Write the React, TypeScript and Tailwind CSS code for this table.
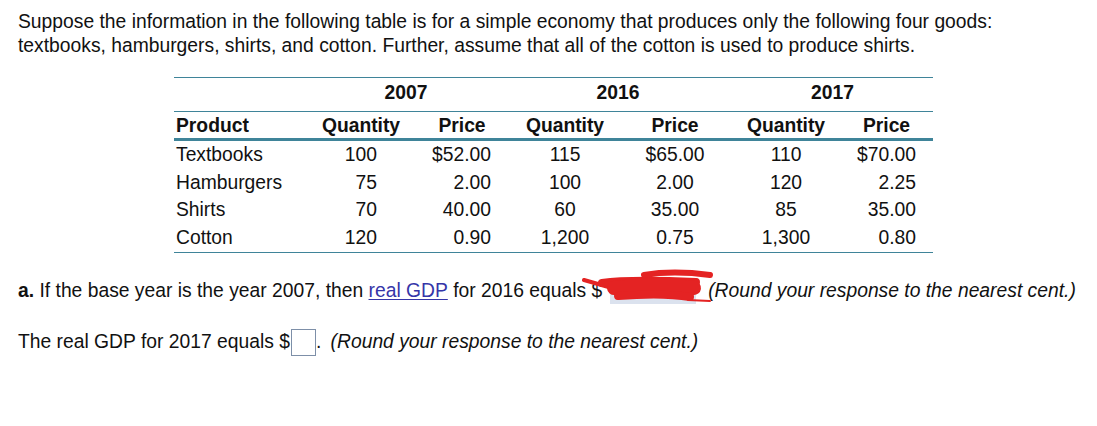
export default function App() {
  const rows = [
    ['Textbooks', '100', '$52.00', '115', '$65.00', '110', '$70.00'],
    ['Hamburgers', '75', '2.00', '100', '2.00', '120', '2.25'],
    ['Shirts', '70', '40.00', '60', '35.00', '85', '35.00'],
    ['Cotton', '120', '0.90', '1,200', '0.75', '1,300', '0.80'],
  ]
  const cols = 'grid grid-cols-[136px_102px_100px_106px_114px_108px_93px]'

  return (
    <div className="w-[1097px] h-[426px] bg-white text-[#111] font-['Liberation_Sans',Arial,sans-serif] text-[19.3px]">
      <p className="pl-[18px] pt-[10px] leading-[24px]">
        Suppose the information in the following table is for a simple economy that produces only the following four goods:
        <br />
        textbooks, hamburgers, shirts, and cotton. Further, assume that all of the cotton is used to produce shirts.
      </p>

      <div className="ml-[174px] mt-[19px] w-[759px]">
        <div className={`${cols} h-[35px] border-t border-b border-[#3f8499] font-bold items-center`}>
          <div />
          <div className="col-span-2 text-center pr-[10px] pb-[3px]">2007</div>
          <div className="col-span-2 text-center pr-[8px] pb-[3px]">2016</div>
          <div className="col-span-2 text-center pb-[3px]">2017</div>
        </div>
        <div className={`${cols} h-[29px] border-b-[3px] border-[#3f8499] font-bold items-center`}>
          <div className="pl-[2px]">Product</div>
          <div className="text-center">Quantity</div>
          <div className="text-center">Price</div>
          <div className="text-center">Quantity</div>
          <div className="text-center">Price</div>
          <div className="text-center">Quantity</div>
          <div className="text-center">Price</div>
        </div>
        <div className="border-b border-[#3f8499] pb-[1px]">
          {rows.map((r) => (
            <div key={r[0]} className={`${cols} h-[27.5px] items-center`}>
              <div className="pl-[2px]">{r[0]}</div>
              <div className="text-right pr-[35px]">{r[1]}</div>
              <div className="text-right pr-[21px]">{r[2]}</div>
              <div className="text-center">{r[3]}</div>
              <div className="text-center">{r[4]}</div>
              <div className="text-center">{r[5]}</div>
              <div className="text-right pr-[17px]">{r[6]}</div>
            </div>
          ))}
        </div>
      </div>

      <div className="pl-[18px] mt-[25px] h-[26px] flex items-center whitespace-pre">
        <b>a.</b>
        <span> If the base year is the year 2007, then </span>
        <a className="text-[#3535a8] underline underline-offset-2">real GDP</a>
        <span> for 2016 equals $</span>
        <span className="relative inline-block w-[86px] h-[26px] ml-[8px] bg-[#dbe2ee]">
          <svg
            className="absolute left-[-28px] top-[-12px] w-[136px] h-[42px]"
            viewBox="0 0 136 42"
          >
            <path d="M2 14 L30 22" stroke="#e42323" strokeWidth="4" strokeLinecap="round" fill="none" />
            <path d="M20 17 C40 14 70 14 114 16" stroke="#e42323" strokeWidth="8" strokeLinecap="round" fill="none" />
            <path d="M32 22 C60 19 90 19 112 22" stroke="#e42323" strokeWidth="14" strokeLinecap="round" fill="none" />
            <path d="M36 30 C60 28 90 28 108 31" stroke="#e42323" strokeWidth="8" strokeLinecap="round" fill="none" />
            <path d="M62 9 C80 6 105 6 128 9" stroke="#e42323" strokeWidth="6" strokeLinecap="round" fill="none" />
            <path d="M106 34 L128 35" stroke="#e42323" strokeWidth="2" strokeLinecap="round" fill="none" />
          </svg>
        </span>
        <span className="ml-[12px] italic">(Round your response to the nearest cent.)</span>
      </div>

      <div className="pl-[18px] mt-[25px] h-[26px] flex items-center whitespace-pre">
        <span>The real GDP for 2017 equals $</span>
        <span className="inline-block w-[25px] h-[27px] ml-[1px] border border-[#7d8fa8]" />
        <span>. </span>
        <span className="ml-[4px] italic">(Round your response to the nearest cent.)</span>
      </div>
    </div>
  )
}
